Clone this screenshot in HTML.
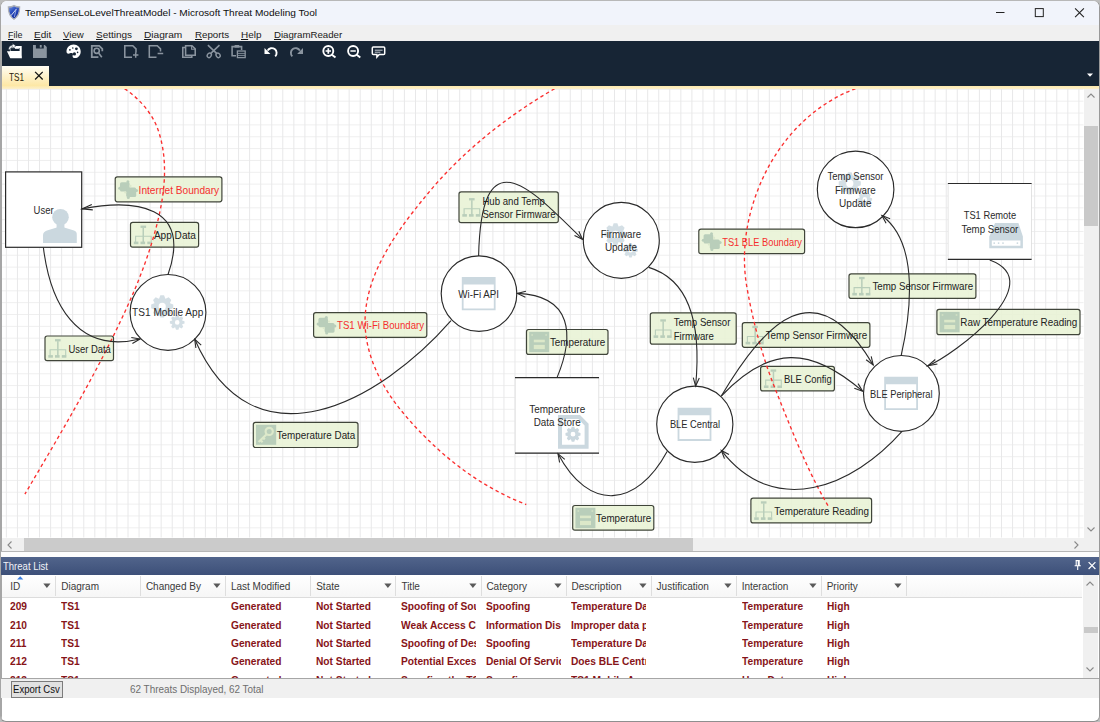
<!DOCTYPE html>
<html><head><meta charset="utf-8"><title>TempSenseLoLevelThreatModel - Microsoft Threat Modeling Tool</title>
<style>
html,body{margin:0;padding:0;}
body{width:1100px;height:722px;overflow:hidden;position:relative;background:#bdbdbd;font-family:"Liberation Sans",sans-serif;}
.t{position:absolute;white-space:nowrap;font-family:"Liberation Sans",sans-serif;}
.abs{position:absolute;}
#win{position:absolute;left:0;top:0;width:1098px;height:720px;border:1px solid #b4b4b4;border-color:#b8b8b8 #999 #8f8f8f #a6a6a6;border-radius:7px 7px 6px 6px;overflow:hidden;background:#fff;box-sizing:content-box;}
u{text-decoration:underline;text-underline-offset:1px;}
svg text{font-family:"Liberation Sans",sans-serif;}
</style></head><body>
<div id="win">
<div id="page" class="abs" style="left:-1px;top:-1px;width:1100px;height:722px;">

<div class="abs" style="left:0;top:0;width:1100px;height:25.5px;background:#f1f4fb;"></div>
<svg class="abs" style="left:7px;top:4px" width="14" height="16" viewBox="0 0 14 16">
<defs><linearGradient id="sh" x1="0" y1="0" x2="0.6" y2="1"><stop offset="0" stop-color="#7d9de6"/><stop offset="0.45" stop-color="#2d50c0"/><stop offset="1" stop-color="#0f2aa0"/></linearGradient></defs>
<path d="M7 1.6 C8.6 2.6 10.6 3 12.6 3 C12.8 8.4 11 12.6 7 15.2 C3 12.6 1.2 8.4 1.4 3 C3.4 3 5.4 2.6 7 1.6 Z" fill="url(#sh)" stroke="#adb0b8" stroke-width="1.3"/>
<path d="M4 11.6 L9.6 4.8" stroke="#e6ebf8" stroke-width="0.9"/><path d="M7.4 13 L9 5.6" stroke="#b9c8ee" stroke-width="0.7"/></svg>
<div class="t" style="left:24.50px;top:7.18px;font-size:9.90px;line-height:11.38px;color:#0e0e0e;transform-origin:0 0;transform:scaleX(1.0226);">TempSenseLoLevelThreatModel - Microsoft Threat Modeling Tool</div>
<svg class="abs" style="left:980px;top:0" width="120" height="25" viewBox="0 0 120 25">
<path d="M16 12.5 H24.5" stroke="#222" stroke-width="1"/>
<rect x="55.3" y="8.6" width="8" height="8" fill="none" stroke="#222" stroke-width="1"/>
<path d="M95.1 8.4 L103.9 17.2 M103.9 8.4 L95.1 17.2" stroke="#222" stroke-width="1.1"/></svg>
<div class="abs" style="left:0;top:25.4px;width:1100px;height:17px;background:#f0f0f0;"></div>
<div class="t" style="left:7.70px;top:28.57px;font-size:9.80px;line-height:11.27px;color:#1a1a1a;transform-origin:0 0;transform:scaleX(0.9119);"><u>F</u>ile</div>
<div class="t" style="left:33.50px;top:28.57px;font-size:9.80px;line-height:11.27px;color:#1a1a1a;transform-origin:0 0;transform:scaleX(1.0185);"><u>E</u>dit</div>
<div class="t" style="left:63.00px;top:28.57px;font-size:9.80px;line-height:11.27px;color:#1a1a1a;transform-origin:0 0;transform:scaleX(0.9874);"><u>V</u>iew</div>
<div class="t" style="left:95.70px;top:28.57px;font-size:9.80px;line-height:11.27px;color:#1a1a1a;transform-origin:0 0;transform:scaleX(1.0167);"><u>S</u>ettings</div>
<div class="t" style="left:144.00px;top:28.57px;font-size:9.80px;line-height:11.27px;color:#1a1a1a;transform-origin:0 0;transform:scaleX(1.0342);"><u>D</u>iagram</div>
<div class="t" style="left:194.50px;top:28.57px;font-size:9.80px;line-height:11.27px;color:#1a1a1a;transform-origin:0 0;transform:scaleX(0.9937);"><u>R</u>eports</div>
<div class="t" style="left:241.20px;top:28.57px;font-size:9.80px;line-height:11.27px;color:#1a1a1a;transform-origin:0 0;transform:scaleX(1.0121);"><u>H</u>elp</div>
<div class="t" style="left:273.90px;top:28.57px;font-size:9.80px;line-height:11.27px;color:#1a1a1a;transform-origin:0 0;transform:scaleX(0.9859);"><u>D</u>iagramReader</div>
<div class="abs" style="left:0;top:41.1px;width:1100px;height:44.5px;background:#172535;"></div>
<svg class="abs" style="left:0;top:41px" width="400" height="24" viewBox="0 41 400 24">
<g fill="#ffffff">
<path d="M9.9,47.6 L11.4,46 H21.7 V57.4 H9.9 Z"/>
<rect x="10.5" y="48.1" width="9.1" height="2.9" fill="#172535"/>
<rect x="15" y="48.1" width="3.9" height="0.8"/>
<path d="M6.9,51.2 H19.6 L22,58.3 H10.3 Z"/>
<path d="M8.4,49.6 C8.6,46.9 10.4,45.3 12.6,45.1 L12.1,43.2 L16,45.9 L12.9,48.2 L12.8,46.7 C11.4,46.9 10.4,47.9 10,49.8 Z" stroke="#172535" stroke-width="0.5"/>
</g>
<path d="M33,45 H44.8 L46.8,47 V58 H33 Z M35.9,45 V48.6 H43.8 V45 Z" fill="#8a949f" fill-rule="evenodd"/>
<rect x="39.8" y="45" width="1.9" height="2.6" fill="#8a949f"/>
<path d="M73.6,44.6 C77.6,44.6 80.7,47.6 80.7,51.4 C80.7,55.3 78,58.1 75,58.1 C73.2,58.1 72.6,57.2 72.6,56.2 C72.6,55.2 73,54.8 73,54.2 C73,53.4 72.3,53 71.3,53 C70.4,53 69.6,53.7 68.6,53.7 C67.3,53.7 66.5,52.7 66.5,51.4 C66.5,47.6 69.6,44.6 73.6,44.6 Z" fill="#ffffff"/>
<circle cx="69.9" cy="49.8" r="0.9" fill="#172535"/>
<circle cx="72.8" cy="48.0" r="0.8" fill="#172535"/>
<circle cx="76.4" cy="48.8" r="1.4" fill="#172535"/>
<circle cx="77.6" cy="52.4" r="0.8" fill="#172535"/>
<circle cx="74.4" cy="53.9" r="1.6" fill="#172535"/>
<path d="M98.4,57.2 H91.8 V45.8 H99.2 L102.3,48.8 V51.2" fill="none" stroke="#8a949f" stroke-width="1.8"/>
<circle cx="96.7" cy="50.8" r="2.6" fill="none" stroke="#8a949f" stroke-width="1.6"/>
<path d="M98.6,52.9 L101.8,57.2" stroke="#8a949f" stroke-width="1.7"/>
<path d="M132,57.3 H124.8 V45.7 H132.8 L136,48.9 V52.4" fill="none" stroke="#8a949f" stroke-width="1.55"/>
<path d="M133,55 H138.4 M135.7,52.3 V57.7" stroke="#8a949f" stroke-width="1.5"/>
<path d="M156.5,57.3 H149.3 V45.7 H157.3 L160.5,48.9 V51.4" fill="none" stroke="#8a949f" stroke-width="1.55"/>
<path d="M157.6,53.6 H163.2" stroke="#8a949f" stroke-width="1.5"/>
<path d="M185.4,47.4 H182.8 V57.2 H191.8 V55.4" fill="none" stroke="#8a949f" stroke-width="1.55"/>
<path d="M185.6,45.7 H192 L195.2,48.9 V55.2 H185.6 Z" fill="none" stroke="#8a949f" stroke-width="1.55"/>
<path d="M191.6,45.9 V49.3 H195" fill="none" stroke="#8a949f" stroke-width="1.1"/>
<path d="M207.9,45.2 L216.6,53.4 M219.5,45.2 L210.8,53.4" stroke="#8a949f" stroke-width="1.6" fill="none"/>
<ellipse cx="209.3" cy="55.3" rx="1.9" ry="2.4" transform="rotate(35 209.3 55.3)" fill="none" stroke="#8a949f" stroke-width="1.4"/>
<ellipse cx="218.1" cy="55.3" rx="1.9" ry="2.4" transform="rotate(-35 218.1 55.3)" fill="none" stroke="#8a949f" stroke-width="1.4"/>
<path d="M236,55.8 H232.1 V46.6 H241.6 V50" fill="none" stroke="#8a949f" stroke-width="1.55"/>
<rect x="234.6" y="45" width="4.6" height="2.6" fill="#8a949f"/>
<rect x="237.4" y="51" width="7.8" height="6.6" fill="none" stroke="#8a949f" stroke-width="1.3"/>
<path d="M238,53.4 H245 M238,55.4 H245" stroke="#8a949f" stroke-width="0.9"/>
<path d="M267.6,50.6 A4.8,4.8 0 1 1 275.2,56.3" fill="none" stroke="#ffffff" stroke-width="1.9"/>
<path d="M264.5,47.9 V54 H270.4 Z" fill="#ffffff"/>
<path d="M299.9,50.6 A4.8,4.8 0 1 0 292.3,56.3" fill="none" stroke="#8a949f" stroke-width="1.9"/>
<path d="M303,47.9 V54 H297.1 Z" fill="#8a949f"/>
<circle cx="328.3" cy="51.0" r="5.0" fill="none" stroke="#ffffff" stroke-width="1.9"/>
<path d="M331.9,54.7 L335.5,57.6" stroke="#ffffff" stroke-width="1.9"/>
<path d="M325.6,51.0 H331 M328.3,48.3 V53.7" stroke="#ffffff" stroke-width="1.7"/>
<circle cx="353.1" cy="51.0" r="5.0" fill="none" stroke="#ffffff" stroke-width="1.9"/>
<path d="M356.7,54.7 L360.3,57.6" stroke="#ffffff" stroke-width="1.9"/>
<path d="M350.4,51.0 H355.8" stroke="#ffffff" stroke-width="1.7"/>
<path d="M373.3,47 H383.7 Q384.7,47 384.7,48 V53.6 Q384.7,54.6 383.7,54.6 H379.2 L376.9,57.1 V54.6 H373.3 Q372.3,54.6 372.3,53.6 V48 Q372.3,47 373.3,47 Z" fill="none" stroke="#ffffff" stroke-width="1.5"/>
<path d="M374.8,50.2 H382.6 M374.8,52.2 H380.4" stroke="#c9ced6" stroke-width="1.0"/>
</svg>
<div class="abs" style="left:1.9px;top:65.9px;width:47.2px;height:20.3px;background:linear-gradient(#fffdf4,#fef3cf 45%,#fde7a4);"></div>
<div class="t" style="left:9.30px;top:71.13px;font-size:10.50px;line-height:12.07px;color:#2a1c08;transform-origin:0 0;transform:scaleX(0.7789);">TS1</div>
<svg class="abs" style="left:34px;top:71px" width="10" height="10" viewBox="0 0 10 10"><path d="M1.1 0.9 L8.7 8.5 M8.7 0.9 L1.1 8.5" stroke="#161616" stroke-width="1.3"/></svg>
<svg class="abs" style="left:1086px;top:72px" width="8" height="6" viewBox="0 0 8 6"><path d="M1 1.5 H7 L4 4.8 Z" fill="#fff"/></svg>
<div class="abs" style="left:0;top:85.8px;width:1100px;height:2.9px;background:linear-gradient(#fde9ac,#fcf0cc);"></div>
<div class="abs" style="left:0;top:41px;width:1.9px;height:681px;background:#a6a6a6;"></div>
<div id="canvas" class="abs" style="left:2.0px;top:88.5px;width:1081.5px;height:449.0px;background:#fff;overflow:hidden;">
<svg class="abs" style="left:-2.0px;top:-88.5px" width="1100" height="722" viewBox="0 0 1100 722">
<path d="M2.0,89.35 H1083.5 M2.0,101.20 H1083.5 M2.0,113.05 H1083.5 M2.0,124.90 H1083.5 M2.0,136.75 H1083.5 M2.0,148.60 H1083.5 M2.0,160.45 H1083.5 M2.0,172.30 H1083.5 M2.0,184.15 H1083.5 M2.0,196.00 H1083.5 M2.0,207.85 H1083.5 M2.0,219.70 H1083.5 M2.0,231.55 H1083.5 M2.0,243.40 H1083.5 M2.0,255.25 H1083.5 M2.0,267.10 H1083.5 M2.0,278.95 H1083.5 M2.0,290.80 H1083.5 M2.0,302.65 H1083.5 M2.0,314.50 H1083.5 M2.0,326.35 H1083.5 M2.0,338.20 H1083.5 M2.0,350.05 H1083.5 M2.0,361.90 H1083.5 M2.0,373.75 H1083.5 M2.0,385.60 H1083.5 M2.0,397.45 H1083.5 M2.0,409.30 H1083.5 M2.0,421.15 H1083.5 M2.0,433.00 H1083.5 M2.0,444.85 H1083.5 M2.0,456.70 H1083.5 M2.0,468.55 H1083.5 M2.0,480.40 H1083.5 M2.0,492.25 H1083.5 M2.0,504.10 H1083.5 M2.0,515.95 H1083.5 M2.0,527.80 H1083.5" stroke="#efefef" stroke-width="1" fill="none"/>
<path d="M6.37,88.5 V537.5 M17.43,88.5 V537.5 M28.48,88.5 V537.5 M39.54,88.5 V537.5 M50.60,88.5 V537.5 M61.66,88.5 V537.5 M72.71,88.5 V537.5 M83.77,88.5 V537.5 M94.83,88.5 V537.5 M105.88,88.5 V537.5 M116.94,88.5 V537.5 M128.00,88.5 V537.5 M139.05,88.5 V537.5 M150.11,88.5 V537.5 M161.17,88.5 V537.5 M172.22,88.5 V537.5 M183.28,88.5 V537.5 M194.34,88.5 V537.5 M205.40,88.5 V537.5 M216.45,88.5 V537.5 M227.51,88.5 V537.5 M238.57,88.5 V537.5 M249.62,88.5 V537.5 M260.68,88.5 V537.5 M271.74,88.5 V537.5 M282.79,88.5 V537.5 M293.85,88.5 V537.5 M304.91,88.5 V537.5 M315.97,88.5 V537.5 M327.02,88.5 V537.5 M338.08,88.5 V537.5 M349.14,88.5 V537.5 M360.19,88.5 V537.5 M371.25,88.5 V537.5 M382.31,88.5 V537.5 M393.37,88.5 V537.5 M404.42,88.5 V537.5 M415.48,88.5 V537.5 M426.54,88.5 V537.5 M437.59,88.5 V537.5 M448.65,88.5 V537.5 M459.71,88.5 V537.5 M470.76,88.5 V537.5 M481.82,88.5 V537.5 M492.88,88.5 V537.5 M503.94,88.5 V537.5 M514.99,88.5 V537.5 M526.05,88.5 V537.5 M537.11,88.5 V537.5 M548.16,88.5 V537.5 M559.22,88.5 V537.5 M570.28,88.5 V537.5 M581.33,88.5 V537.5 M592.39,88.5 V537.5 M603.45,88.5 V537.5 M614.51,88.5 V537.5 M625.56,88.5 V537.5 M636.62,88.5 V537.5 M647.68,88.5 V537.5 M658.73,88.5 V537.5 M669.79,88.5 V537.5 M680.85,88.5 V537.5 M691.90,88.5 V537.5 M702.96,88.5 V537.5 M714.02,88.5 V537.5 M725.08,88.5 V537.5 M736.13,88.5 V537.5 M747.19,88.5 V537.5 M758.25,88.5 V537.5 M769.30,88.5 V537.5 M780.36,88.5 V537.5 M791.42,88.5 V537.5 M802.47,88.5 V537.5 M813.53,88.5 V537.5 M824.59,88.5 V537.5 M835.65,88.5 V537.5 M846.70,88.5 V537.5 M857.76,88.5 V537.5 M868.82,88.5 V537.5 M879.87,88.5 V537.5 M890.93,88.5 V537.5 M901.99,88.5 V537.5 M913.04,88.5 V537.5 M924.10,88.5 V537.5 M935.16,88.5 V537.5 M946.22,88.5 V537.5 M957.27,88.5 V537.5 M968.33,88.5 V537.5 M979.39,88.5 V537.5 M990.44,88.5 V537.5 M1001.50,88.5 V537.5 M1012.56,88.5 V537.5 M1023.61,88.5 V537.5 M1034.67,88.5 V537.5 M1045.73,88.5 V537.5 M1056.79,88.5 V537.5 M1067.84,88.5 V537.5 M1078.90,88.5 V537.5" stroke="#e8e8e9" stroke-width="1" fill="none"/>
<rect x="5.6" y="171.9" width="76.1" height="75.4" fill="#fff" stroke="#2a2a2a" stroke-width="1.2"/>
<g fill="#cbd8df"><circle cx="60.5" cy="217.2" r="8.3"/><rect x="56.6" y="222" width="7.8" height="9" /><path d="M43,243 V235.4 C43,232.6 44.6,231.4 47,230.6 L56.8,227.4 H64.2 L74,230.6 C76.4,231.4 76.8,232.6 76.8,235.4 V243 Z"/></g>
<rect x="515.2" y="377.7" width="83.6" height="75.5" fill="#fff" stroke="#dcdcdc" stroke-width="0.8"/>
<path d="M515,377.7 H599 M515,453.2 H599" stroke="#2a2a2a" stroke-width="1.2"/>
<path d="M558,415.1 H580 L588.6,423.8 V448.8 H558 Z M562,419.1 V444.8 H584.6 V425.4 L578.4,419.1 Z" fill="#cbd8df" fill-rule="evenodd"/>
<path d="M578.21,432.16 L580.50,432.95 L580.50,435.45 L578.21,436.24 L578.13,436.44 L579.18,438.62 L577.42,440.38 L575.24,439.33 L575.04,439.41 L574.25,441.70 L571.75,441.70 L570.96,439.41 L570.76,439.33 L568.58,440.38 L566.82,438.62 L567.87,436.44 L567.79,436.24 L565.50,435.45 L565.50,432.95 L567.79,432.16 L567.87,431.96 L566.82,429.78 L568.58,428.02 L570.76,429.07 L570.96,428.99 L571.75,426.70 L574.25,426.70 L575.04,428.99 L575.24,429.07 L577.42,428.02 L579.18,429.78 L578.13,431.96 Z M570.60,434.20 a2.40,2.40 0 1,0 4.80,0 a2.40,2.40 0 1,0 -4.80,0 Z" fill="#cbd8df" fill-rule="evenodd"/>
<rect x="948.1" y="183.5" width="83.3" height="75.9" fill="#fff" stroke="#dcdcdc" stroke-width="0.8"/>
<path d="M947.9,183.5 H1031.6 M947.9,259.4 H1031.6" stroke="#2a2a2a" stroke-width="1.2"/>
<path d="M995,223 H1018.4 L1022.9,236.6 V248.3 H989.3 V236.6 Z M991.8,240.4 V245.8 H1020.4 V240.4 Z" fill="#cbd8df" fill-rule="evenodd"/>
<circle cx="994.2" cy="243.1" r="0.9" fill="#cbd8df"/>
<circle cx="998.6" cy="243.1" r="0.9" fill="#cbd8df"/>
<circle cx="1003.0" cy="243.1" r="0.9" fill="#cbd8df"/>
<circle cx="1017.4" cy="243.1" r="0.9" fill="#cbd8df"/>
<circle cx="168.0" cy="312.4" r="37.9" fill="#fff" stroke="#2a2a2a" stroke-width="1.15"/>
<path d="M170.02,303.34 L173.25,304.56 L173.25,308.24 L170.02,309.46 L169.90,309.77 L171.31,312.91 L168.71,315.51 L165.57,314.10 L165.26,314.22 L164.04,317.45 L160.36,317.45 L159.14,314.22 L158.83,314.10 L155.69,315.51 L153.09,312.91 L154.50,309.77 L154.38,309.46 L151.15,308.24 L151.15,304.56 L154.38,303.34 L154.50,303.03 L153.09,299.89 L155.69,297.29 L158.83,298.70 L159.14,298.58 L160.36,295.35 L164.04,295.35 L165.26,298.58 L165.57,298.70 L168.71,297.29 L171.31,299.89 L169.90,303.03 Z M158.60,306.40 a3.60,3.60 0 1,0 7.20,0 a3.60,3.60 0 1,0 -7.20,0 Z" fill="#cbd8df" fill-rule="evenodd" opacity="0.82"/><path d="M182.23,320.43 L184.50,321.19 L184.50,323.61 L182.23,324.37 L182.15,324.56 L183.22,326.70 L181.50,328.42 L179.36,327.35 L179.17,327.43 L178.41,329.70 L175.99,329.70 L175.23,327.43 L175.04,327.35 L172.90,328.42 L171.18,326.70 L172.25,324.56 L172.17,324.37 L169.90,323.61 L169.90,321.19 L172.17,320.43 L172.25,320.24 L171.18,318.10 L172.90,316.38 L175.04,317.45 L175.23,317.37 L175.99,315.10 L178.41,315.10 L179.17,317.37 L179.36,317.45 L181.50,316.38 L183.22,318.10 L182.15,320.24 Z M174.90,322.40 a2.30,2.30 0 1,0 4.60,0 a2.30,2.30 0 1,0 -4.60,0 Z" fill="#cbd8df" fill-rule="evenodd" opacity="0.82"/>
<circle cx="479.0" cy="293.6" r="37.8" fill="#fff" stroke="#2a2a2a" stroke-width="1.15"/>
<path d="M461.8,277.0 h33.8 v33.2 h-33.8 Z M463.6,284.5 h30.2 v23.9 h-30.2 Z" fill="#cbd8df" fill-rule="evenodd"/>
<circle cx="621.3" cy="240.3" r="38.0" fill="#fff" stroke="#2a2a2a" stroke-width="1.15"/>
<path d="M623.32,231.24 L626.55,232.46 L626.55,236.14 L623.32,237.36 L623.20,237.67 L624.61,240.81 L622.01,243.41 L618.87,242.00 L618.56,242.12 L617.34,245.35 L613.66,245.35 L612.44,242.12 L612.13,242.00 L608.99,243.41 L606.39,240.81 L607.80,237.67 L607.68,237.36 L604.45,236.14 L604.45,232.46 L607.68,231.24 L607.80,230.93 L606.39,227.79 L608.99,225.19 L612.13,226.60 L612.44,226.48 L613.66,223.25 L617.34,223.25 L618.56,226.48 L618.87,226.60 L622.01,225.19 L624.61,227.79 L623.20,230.93 Z M611.90,234.30 a3.60,3.60 0 1,0 7.20,0 a3.60,3.60 0 1,0 -7.20,0 Z" fill="#cbd8df" fill-rule="evenodd" opacity="0.82"/><path d="M635.53,248.33 L637.80,249.09 L637.80,251.51 L635.53,252.27 L635.45,252.46 L636.52,254.60 L634.80,256.32 L632.66,255.25 L632.47,255.33 L631.71,257.60 L629.29,257.60 L628.53,255.33 L628.34,255.25 L626.20,256.32 L624.48,254.60 L625.55,252.46 L625.47,252.27 L623.20,251.51 L623.20,249.09 L625.47,248.33 L625.55,248.14 L624.48,246.00 L626.20,244.28 L628.34,245.35 L628.53,245.27 L629.29,243.00 L631.71,243.00 L632.47,245.27 L632.66,245.35 L634.80,244.28 L636.52,246.00 L635.45,248.14 Z M628.20,250.30 a2.30,2.30 0 1,0 4.60,0 a2.30,2.30 0 1,0 -4.60,0 Z" fill="#cbd8df" fill-rule="evenodd" opacity="0.82"/>
<circle cx="694.8" cy="424.3" r="38.1" fill="#fff" stroke="#2a2a2a" stroke-width="1.15"/>
<path d="M677.6,407.7 h33.8 v33.2 h-33.8 Z M679.4,415.2 h30.2 v23.9 h-30.2 Z" fill="#cbd8df" fill-rule="evenodd"/>
<circle cx="901.4" cy="393.4" r="37.9" fill="#fff" stroke="#2a2a2a" stroke-width="1.15"/>
<path d="M884.2,376.8 h33.8 v33.2 h-33.8 Z M886.0,384.3 h30.2 v23.9 h-30.2 Z" fill="#cbd8df" fill-rule="evenodd"/>
<circle cx="855.6" cy="189.4" r="38.3" fill="#fff" stroke="#2a2a2a" stroke-width="1.15"/>
<path d="M857.62,180.34 L860.85,181.56 L860.85,185.24 L857.62,186.46 L857.50,186.77 L858.91,189.91 L856.31,192.51 L853.17,191.10 L852.86,191.22 L851.64,194.45 L847.96,194.45 L846.74,191.22 L846.43,191.10 L843.29,192.51 L840.69,189.91 L842.10,186.77 L841.98,186.46 L838.75,185.24 L838.75,181.56 L841.98,180.34 L842.10,180.03 L840.69,176.89 L843.29,174.29 L846.43,175.70 L846.74,175.58 L847.96,172.35 L851.64,172.35 L852.86,175.58 L853.17,175.70 L856.31,174.29 L858.91,176.89 L857.50,180.03 Z M846.20,183.40 a3.60,3.60 0 1,0 7.20,0 a3.60,3.60 0 1,0 -7.20,0 Z" fill="#cbd8df" fill-rule="evenodd" opacity="0.82"/><path d="M869.83,197.43 L872.10,198.19 L872.10,200.61 L869.83,201.37 L869.75,201.56 L870.82,203.70 L869.10,205.42 L866.96,204.35 L866.77,204.43 L866.01,206.70 L863.59,206.70 L862.83,204.43 L862.64,204.35 L860.50,205.42 L858.78,203.70 L859.85,201.56 L859.77,201.37 L857.50,200.61 L857.50,198.19 L859.77,197.43 L859.85,197.24 L858.78,195.10 L860.50,193.38 L862.64,194.45 L862.83,194.37 L863.59,192.10 L866.01,192.10 L866.77,194.37 L866.96,194.45 L869.10,193.38 L870.82,195.10 L869.75,197.24 Z M862.50,199.40 a2.30,2.30 0 1,0 4.60,0 a2.30,2.30 0 1,0 -4.60,0 Z" fill="#cbd8df" fill-rule="evenodd" opacity="0.82"/>
<rect x="115.2" y="176.9" width="106.7" height="24.9" rx="2.2" fill="#e8f3d5" fill-opacity="0.88" stroke="#40453a" stroke-width="1.2"/>
<rect x="120.0" y="182.2" width="9.6" height="9.4" rx="1.6" fill="#b9ceba"/><rect x="126.2" y="187.5" width="10.0" height="9.6" rx="1.6" fill="#b9ceba"/><circle cx="127.9" cy="181.8" r="1.5" fill="#b9ceba"/><circle cx="119.7" cy="188.3" r="1.5" fill="#b9ceba"/><circle cx="128.3" cy="197.5" r="1.5" fill="#b9ceba"/><circle cx="136.5" cy="190.5" r="1.5" fill="#b9ceba"/><circle cx="130.5" cy="185.9" r="1.1" fill="#dbe8cb"/><circle cx="125.3" cy="192.5" r="1.1" fill="#dbe8cb"/>
<rect x="130.5" y="222.4" width="68.1" height="24.8" rx="2.2" fill="#e8f3d5" fill-opacity="0.88" stroke="#40453a" stroke-width="1.2"/>
<rect x="140.5" y="225.6" width="5.6" height="2.3" fill="#b9ceba"/><rect x="142.5" y="227.7" width="1.5" height="14.5" fill="#b9ceba"/><path d="M135.6,241.9 v-5.6 h15.6 v5.6" fill="none" stroke="#b9ceba" stroke-width="1.1"/><rect x="133.8" y="241.6" width="4.6" height="2.6" fill="#b9ceba"/><rect x="140.5" y="241.6" width="4.6" height="2.6" fill="#b9ceba"/><rect x="147.3" y="241.6" width="4.6" height="2.6" fill="#b9ceba"/>
<rect x="45.0" y="336.0" width="68.5" height="24.7" rx="2.2" fill="#e8f3d5" fill-opacity="0.88" stroke="#40453a" stroke-width="1.2"/>
<rect x="55.0" y="339.1" width="5.6" height="2.3" fill="#b9ceba"/><rect x="57.1" y="341.2" width="1.5" height="14.5" fill="#b9ceba"/><path d="M50.1,355.4 v-5.6 h15.6 v5.6" fill="none" stroke="#b9ceba" stroke-width="1.1"/><rect x="48.3" y="355.1" width="4.6" height="2.6" fill="#b9ceba"/><rect x="55.0" y="355.1" width="4.6" height="2.6" fill="#b9ceba"/><rect x="61.8" y="355.1" width="4.6" height="2.6" fill="#b9ceba"/>
<rect x="313.6" y="312.7" width="113.2" height="24.6" rx="2.2" fill="#e8f3d5" fill-opacity="0.88" stroke="#40453a" stroke-width="1.2"/>
<rect x="318.4" y="317.8" width="9.6" height="9.4" rx="1.6" fill="#b9ceba"/><rect x="324.6" y="323.1" width="10.0" height="9.6" rx="1.6" fill="#b9ceba"/><circle cx="326.3" cy="317.4" r="1.5" fill="#b9ceba"/><circle cx="318.1" cy="323.9" r="1.5" fill="#b9ceba"/><circle cx="326.7" cy="333.1" r="1.5" fill="#b9ceba"/><circle cx="334.9" cy="326.1" r="1.5" fill="#b9ceba"/><circle cx="328.9" cy="321.5" r="1.1" fill="#dbe8cb"/><circle cx="323.7" cy="328.1" r="1.1" fill="#dbe8cb"/>
<rect x="253.3" y="422.4" width="104.7" height="25.1" rx="2.2" fill="#e8f3d5" fill-opacity="0.88" stroke="#40453a" stroke-width="1.2"/>
<rect x="256.0" y="424.8" width="20.2" height="20" fill="#b9ceba"/><circle cx="269.2" cy="431.4" r="3.6" fill="none" stroke="#dde9cb" stroke-width="2.2"/><path d="M266.6,434.2 L258.6,442.0 M260.4,440.0 l2.2,2.2 M263.0,437.6 l1.8,1.8" stroke="#dde9cb" stroke-width="2.2" fill="none"/>
<rect x="459.0" y="191.9" width="99.3" height="30.8" rx="2.2" fill="#e8f3d5" fill-opacity="0.88" stroke="#40453a" stroke-width="1.2"/>
<rect x="469.0" y="198.1" width="5.6" height="2.3" fill="#b9ceba"/><rect x="471.1" y="200.2" width="1.5" height="14.5" fill="#b9ceba"/><path d="M464.1,214.4 v-5.6 h15.6 v5.6" fill="none" stroke="#b9ceba" stroke-width="1.1"/><rect x="462.3" y="214.1" width="4.6" height="2.6" fill="#b9ceba"/><rect x="469.0" y="214.1" width="4.6" height="2.6" fill="#b9ceba"/><rect x="475.8" y="214.1" width="4.6" height="2.6" fill="#b9ceba"/>
<rect x="526.5" y="329.5" width="81.5" height="24.9" rx="2.2" fill="#e8f3d5" fill-opacity="0.88" stroke="#40453a" stroke-width="1.2"/>
<rect x="529.2" y="331.8" width="20" height="20.4" fill="#b9ceba"/><rect x="533.8" y="339.7" width="11" height="2.6" fill="#dce8c9"/><rect x="533.8" y="344.9" width="11" height="4.2" fill="#dce8c9"/><circle cx="532.1" cy="334.9" r="1" fill="#cfdfc3"/><circle cx="546.1" cy="334.9" r="1" fill="#cfdfc3"/>
<rect x="650.3" y="312.8" width="85.9" height="31.4" rx="2.2" fill="#e8f3d5" fill-opacity="0.88" stroke="#40453a" stroke-width="1.2"/>
<rect x="660.3" y="319.3" width="5.6" height="2.3" fill="#b9ceba"/><rect x="662.4" y="321.4" width="1.5" height="14.5" fill="#b9ceba"/><path d="M655.4,335.6 v-5.6 h15.6 v5.6" fill="none" stroke="#b9ceba" stroke-width="1.1"/><rect x="653.6" y="335.3" width="4.6" height="2.6" fill="#b9ceba"/><rect x="660.3" y="335.3" width="4.6" height="2.6" fill="#b9ceba"/><rect x="667.1" y="335.3" width="4.6" height="2.6" fill="#b9ceba"/>
<rect x="742.3" y="322.7" width="127.6" height="24.6" rx="2.2" fill="#e8f3d5" fill-opacity="0.88" stroke="#40453a" stroke-width="1.2"/>
<rect x="752.3" y="325.8" width="5.6" height="2.3" fill="#b9ceba"/><rect x="754.4" y="327.9" width="1.5" height="14.5" fill="#b9ceba"/><path d="M747.4,342.1 v-5.6 h15.6 v5.6" fill="none" stroke="#b9ceba" stroke-width="1.1"/><rect x="745.6" y="341.8" width="4.6" height="2.6" fill="#b9ceba"/><rect x="752.3" y="341.8" width="4.6" height="2.6" fill="#b9ceba"/><rect x="759.1" y="341.8" width="4.6" height="2.6" fill="#b9ceba"/>
<rect x="760.6" y="366.4" width="73.8" height="24.5" rx="2.2" fill="#e8f3d5" fill-opacity="0.88" stroke="#40453a" stroke-width="1.2"/>
<rect x="770.6" y="369.4" width="5.6" height="2.3" fill="#b9ceba"/><rect x="772.7" y="371.5" width="1.5" height="14.5" fill="#b9ceba"/><path d="M765.7,385.7 v-5.6 h15.6 v5.6" fill="none" stroke="#b9ceba" stroke-width="1.1"/><rect x="763.9" y="385.4" width="4.6" height="2.6" fill="#b9ceba"/><rect x="770.6" y="385.4" width="4.6" height="2.6" fill="#b9ceba"/><rect x="777.4" y="385.4" width="4.6" height="2.6" fill="#b9ceba"/>
<rect x="698.8" y="229.1" width="105.8" height="24.6" rx="2.2" fill="#e8f3d5" fill-opacity="0.88" stroke="#40453a" stroke-width="1.2"/>
<rect x="703.6" y="234.2" width="9.6" height="9.4" rx="1.6" fill="#b9ceba"/><rect x="709.8" y="239.5" width="10.0" height="9.6" rx="1.6" fill="#b9ceba"/><circle cx="711.5" cy="233.8" r="1.5" fill="#b9ceba"/><circle cx="703.3" cy="240.3" r="1.5" fill="#b9ceba"/><circle cx="711.9" cy="249.5" r="1.5" fill="#b9ceba"/><circle cx="720.1" cy="242.5" r="1.5" fill="#b9ceba"/><circle cx="714.1" cy="237.9" r="1.1" fill="#dbe8cb"/><circle cx="708.9" cy="244.5" r="1.1" fill="#dbe8cb"/>
<rect x="849.0" y="273.8" width="126.9" height="24.6" rx="2.2" fill="#e8f3d5" fill-opacity="0.88" stroke="#40453a" stroke-width="1.2"/>
<rect x="859.0" y="276.9" width="5.6" height="2.3" fill="#b9ceba"/><rect x="861.1" y="279.0" width="1.5" height="14.5" fill="#b9ceba"/><path d="M854.1,293.2 v-5.6 h15.6 v5.6" fill="none" stroke="#b9ceba" stroke-width="1.1"/><rect x="852.3" y="292.9" width="4.6" height="2.6" fill="#b9ceba"/><rect x="859.0" y="292.9" width="4.6" height="2.6" fill="#b9ceba"/><rect x="865.8" y="292.9" width="4.6" height="2.6" fill="#b9ceba"/>
<rect x="936.9" y="309.3" width="143.1" height="25.3" rx="2.2" fill="#e8f3d5" fill-opacity="0.88" stroke="#40453a" stroke-width="1.2"/>
<rect x="939.6" y="311.9" width="20" height="20.4" fill="#b9ceba"/><rect x="944.2" y="319.8" width="11" height="2.6" fill="#dce8c9"/><rect x="944.2" y="325.0" width="11" height="4.2" fill="#dce8c9"/><circle cx="942.5" cy="315.0" r="1" fill="#cfdfc3"/><circle cx="956.5" cy="315.0" r="1" fill="#cfdfc3"/>
<rect x="572.7" y="505.5" width="81.1" height="24.7" rx="2.2" fill="#e8f3d5" fill-opacity="0.88" stroke="#40453a" stroke-width="1.2"/>
<rect x="575.4" y="507.8" width="20" height="20.4" fill="#b9ceba"/><rect x="580.0" y="515.6" width="11" height="2.6" fill="#dce8c9"/><rect x="580.0" y="520.9" width="11" height="4.2" fill="#dce8c9"/><circle cx="578.3" cy="510.9" r="1" fill="#cfdfc3"/><circle cx="592.3" cy="510.9" r="1" fill="#cfdfc3"/>
<rect x="750.9" y="498.2" width="120.7" height="24.7" rx="2.2" fill="#e8f3d5" fill-opacity="0.88" stroke="#40453a" stroke-width="1.2"/>
<rect x="760.9" y="501.3" width="5.6" height="2.3" fill="#b9ceba"/><rect x="763.0" y="503.4" width="1.5" height="14.5" fill="#b9ceba"/><path d="M756.0,517.6 v-5.6 h15.6 v5.6" fill="none" stroke="#b9ceba" stroke-width="1.1"/><rect x="754.2" y="517.3" width="4.6" height="2.6" fill="#b9ceba"/><rect x="760.9" y="517.3" width="4.6" height="2.6" fill="#b9ceba"/><rect x="767.7" y="517.3" width="4.6" height="2.6" fill="#b9ceba"/>
<path d="M124.6,88.6 C140.4,99.6 153.4,114.3 159.1,132.9 C170.0,168.2 162.8,205.8 152.6,240.1 C142.5,274.0 128.3,305.7 112.6,337.5 C86.1,391.0 55.1,442.7 24.9,494.2" fill="none" stroke="#fb2f2f" stroke-width="1.35" stroke-dasharray="3.5 3.0"/>
<path d="M554.6,88.7 C507.1,116.2 463.0,151.1 428.1,193.2 C399.7,227.5 369.3,267.6 365.4,312.9 C362.2,350.3 380.4,386.1 404.2,414.2 C437.2,453.2 478.4,486.3 526.3,504.5" fill="none" stroke="#fb2f2f" stroke-width="1.35" stroke-dasharray="3.5 3.0"/>
<path d="M855.5,88.6 C815.2,103.8 783.5,135.6 764.7,174.2 C747.6,209.3 740.2,249.2 746.9,287.3 C753.0,322.0 762.3,356.7 775.5,389.7 C791.5,429.5 806.8,469.6 828.5,506.6" fill="none" stroke="#fb2f2f" stroke-width="1.35" stroke-dasharray="3.5 3.0"/>
<path d="M43.4,247.6 C50.0,301.5 75.8,354.9 140.0,339.0" fill="none" stroke="#2a2a2a" stroke-width="1.1"/>
<path d="M132.4,343.4 L140.0,339.0 L131.3,337.5" fill="none" stroke="#2a2a2a" stroke-width="1.1"/>
<path d="M168.1,274.3 C192.3,205.0 134.6,198.6 82.0,208.9" fill="none" stroke="#2a2a2a" stroke-width="1.1"/>
<path d="M91.8,204.4 L82.0,208.9 L92.8,209.9" fill="none" stroke="#2a2a2a" stroke-width="1.1"/>
<path d="M451.0,320.7 C381.1,400.7 253.6,473.2 194.7,339.3" fill="none" stroke="#2a2a2a" stroke-width="1.1"/>
<path d="M201.2,345.2 L194.7,339.3 L195.9,348.0" fill="none" stroke="#2a2a2a" stroke-width="1.1"/>
<path d="M478.6,255.9 C481.4,136.3 528.9,186.0 582.5,239.3" fill="none" stroke="#2a2a2a" stroke-width="1.1"/>
<path d="M574.5,235.6 L582.5,239.3 L578.8,231.3" fill="none" stroke="#2a2a2a" stroke-width="1.1"/>
<path d="M648.7,267.4 C698.9,282.5 699.7,343.6 695.6,386.1" fill="none" stroke="#2a2a2a" stroke-width="1.1"/>
<path d="M693.3,377.6 L695.6,386.1 L699.3,378.1" fill="none" stroke="#2a2a2a" stroke-width="1.1"/>
<path d="M557.1,377.4 C574.5,335.5 572.6,295.6 517.4,293.4" fill="none" stroke="#2a2a2a" stroke-width="1.1"/>
<path d="M525.9,291.2 L517.4,293.4 L525.4,297.2" fill="none" stroke="#2a2a2a" stroke-width="1.1"/>
<path d="M721.3,396.0 C764.6,324.1 815.0,266.5 873.2,365.0" fill="none" stroke="#2a2a2a" stroke-width="1.1"/>
<path d="M866.1,359.8 L873.2,365.0 L871.2,356.4" fill="none" stroke="#2a2a2a" stroke-width="1.1"/>
<path d="M721.3,396.0 C769.6,345.0 810.6,346.2 862.6,391.2" fill="none" stroke="#2a2a2a" stroke-width="1.1"/>
<path d="M854.3,388.3 L862.6,391.2 L858.1,383.6" fill="none" stroke="#2a2a2a" stroke-width="1.1"/>
<path d="M901.1,355.9 C910.2,315.4 920.3,244.0 881.9,215.5" fill="none" stroke="#2a2a2a" stroke-width="1.1"/>
<path d="M890.1,218.8 L881.9,215.5 L886.1,223.3" fill="none" stroke="#2a2a2a" stroke-width="1.1"/>
<path d="M989.7,259.9 C1051.7,282.4 952.8,355.9 927.8,365.8" fill="none" stroke="#2a2a2a" stroke-width="1.1"/>
<path d="M935.3,359.5 L927.8,365.8 L937.4,364.0" fill="none" stroke="#2a2a2a" stroke-width="1.1"/>
<path d="M902.0,431.4 C853.0,486.8 774.5,519.3 721.3,450.4" fill="none" stroke="#2a2a2a" stroke-width="1.1"/>
<path d="M729.0,454.6 L721.3,450.4 L724.5,458.6" fill="none" stroke="#2a2a2a" stroke-width="1.1"/>
<path d="M667.1,451.5 C636.5,508.1 588.7,511.9 558.0,453.8" fill="none" stroke="#2a2a2a" stroke-width="1.1"/>
<path d="M564.8,459.4 L558.0,453.8 L559.6,462.5" fill="none" stroke="#2a2a2a" stroke-width="1.1"/>
<text x="138.6" y="194.0" font-size="10.30" fill="#f52e2e" textLength="80.60" lengthAdjust="spacingAndGlyphs">Internet Boundary</text>
<text x="153.9" y="239.0" font-size="10.30" fill="#222222" textLength="42.00" lengthAdjust="spacingAndGlyphs">App Data</text>
<text x="68.4" y="353.0" font-size="10.30" fill="#222222" textLength="42.40" lengthAdjust="spacingAndGlyphs">User Data</text>
<text x="337.0" y="329.0" font-size="10.30" fill="#f52e2e" textLength="87.10" lengthAdjust="spacingAndGlyphs">TS1 Wi-Fi Boundary</text>
<text x="276.7" y="439.0" font-size="10.30" fill="#222222" textLength="78.60" lengthAdjust="spacingAndGlyphs">Temperature Data</text>
<text x="482.4" y="205.0" font-size="10.30" fill="#222222" textLength="62.36" lengthAdjust="spacingAndGlyphs">Hub and Temp</text>
<text x="482.4" y="218.0" font-size="10.30" fill="#222222" textLength="73.20" lengthAdjust="spacingAndGlyphs">Sensor Firmware</text>
<text x="549.9" y="346.0" font-size="10.30" fill="#222222" textLength="55.40" lengthAdjust="spacingAndGlyphs">Temperature</text>
<text x="673.7" y="326.0" font-size="10.30" fill="#222222" textLength="56.70" lengthAdjust="spacingAndGlyphs">Temp Sensor</text>
<text x="673.7" y="340.0" font-size="10.30" fill="#222222" textLength="40.10" lengthAdjust="spacingAndGlyphs">Firmware</text>
<text x="765.7" y="339.0" font-size="10.30" fill="#222222" textLength="101.50" lengthAdjust="spacingAndGlyphs">Temp Sensor Firmware</text>
<text x="784.0" y="383.0" font-size="10.30" fill="#222222" textLength="47.70" lengthAdjust="spacingAndGlyphs">BLE Config</text>
<text x="722.2" y="246.0" font-size="10.30" fill="#f52e2e" textLength="79.70" lengthAdjust="spacingAndGlyphs">TS1 BLE Boundary</text>
<text x="872.4" y="290.0" font-size="10.30" fill="#222222" textLength="100.80" lengthAdjust="spacingAndGlyphs">Temp Sensor Firmware</text>
<text x="960.3" y="326.0" font-size="10.30" fill="#222222" textLength="117.00" lengthAdjust="spacingAndGlyphs">Raw Temperature Reading</text>
<text x="596.1" y="522.0" font-size="10.30" fill="#222222" textLength="55.00" lengthAdjust="spacingAndGlyphs">Temperature</text>
<text x="774.3" y="515.0" font-size="10.30" fill="#222222" textLength="94.60" lengthAdjust="spacingAndGlyphs">Temperature Reading</text>
<text x="132.1" y="316" font-size="10.30" fill="#2a2a2a" textLength="71.20" lengthAdjust="spacingAndGlyphs">TS1 Mobile App</text>
<text x="458.3" y="298" font-size="10.30" fill="#2a2a2a" textLength="40.70" lengthAdjust="spacingAndGlyphs">Wi-Fi API</text>
<text x="600.8" y="238" font-size="10.30" fill="#2a2a2a" textLength="40.30" lengthAdjust="spacingAndGlyphs">Firmware</text>
<text x="604.9" y="251" font-size="10.30" fill="#2a2a2a" textLength="32.10" lengthAdjust="spacingAndGlyphs">Update</text>
<text x="669.9" y="428" font-size="10.30" fill="#2a2a2a" textLength="50.20" lengthAdjust="spacingAndGlyphs">BLE Central</text>
<text x="870.1" y="398" font-size="10.30" fill="#2a2a2a" textLength="62.50" lengthAdjust="spacingAndGlyphs">BLE Peripheral</text>
<text x="827.5" y="180" font-size="10.30" fill="#2a2a2a" textLength="55.90" lengthAdjust="spacingAndGlyphs">Temp Sensor</text>
<text x="834.9" y="194" font-size="10.30" fill="#2a2a2a" textLength="40.80" lengthAdjust="spacingAndGlyphs">Firmware</text>
<text x="839.1" y="207" font-size="10.30" fill="#2a2a2a" textLength="32.40" lengthAdjust="spacingAndGlyphs">Update</text>
<text x="33.6" y="214" font-size="10.30" fill="#2a2a2a" textLength="20.00" lengthAdjust="spacingAndGlyphs">User</text>
<text x="529.3" y="413" font-size="10.30" fill="#2a2a2a" textLength="55.90" lengthAdjust="spacingAndGlyphs">Temperature</text>
<text x="533.7" y="426" font-size="10.30" fill="#2a2a2a" textLength="47.00" lengthAdjust="spacingAndGlyphs">Data Store</text>
<text x="963.7" y="219" font-size="10.30" fill="#2a2a2a" textLength="52.40" lengthAdjust="spacingAndGlyphs">TS1 Remote</text>
<text x="961.4" y="233" font-size="10.30" fill="#2a2a2a" textLength="56.90" lengthAdjust="spacingAndGlyphs">Temp Sensor</text>
</svg></div>
<div class="abs" style="left:1083.5px;top:88.7px;width:15px;height:449px;background:#f0f0f0;"></div>
<div class="abs" style="left:1083.8px;top:126px;width:14.2px;height:99.8px;background:#c9c9c9;"></div>
<svg class="abs" style="left:1085px;top:90px" width="12" height="12" viewBox="0 0 12 12"><path d="M2.5 7.5 L6 4 L9.5 7.5" fill="none" stroke="#8a8a8a" stroke-width="1.1"/></svg>
<svg class="abs" style="left:1085px;top:523px" width="12" height="12" viewBox="0 0 12 12"><path d="M2.5 4.5 L6 8 L9.5 4.5" fill="none" stroke="#8a8a8a" stroke-width="1.1"/></svg>
<div class="abs" style="left:2px;top:537.5px;width:1097px;height:13.5px;background:#f0f0f0;"></div>
<div class="abs" style="left:24.3px;top:537.8px;width:668.7px;height:13.3px;background:#cbcbcb;"></div>
<svg class="abs" style="left:4px;top:538.5px" width="12" height="12" viewBox="0 0 12 12"><path d="M7.5 2.5 L4 6 L7.5 9.5" fill="none" stroke="#8a8a8a" stroke-width="1.1"/></svg>
<svg class="abs" style="left:1070px;top:538.5px" width="12" height="12" viewBox="0 0 12 12"><path d="M4.5 2.5 L8 6 L4.5 9.5" fill="none" stroke="#8a8a8a" stroke-width="1.1"/></svg>
<div class="abs" style="left:0;top:551.1px;width:1100px;height:1.4px;background:#b6b6b6;"></div>
<div class="abs" style="left:0;top:552.4px;width:1100px;height:4.8px;background:#fdfdfd;"></div>
<div class="abs" style="left:1.2px;top:557px;width:1098px;height:17.8px;background:linear-gradient(#51648b,#3d5079);"></div>
<div class="t" style="left:3.20px;top:560.13px;font-size:10.50px;line-height:12.07px;color:#f1f3f8;transform-origin:0 0;transform:scaleX(0.9072);">Threat List</div>
<svg class="abs" style="left:1070px;top:558px" width="28" height="16" viewBox="1070 558 28 16"><path d="M1075.6,560.6 H1079.8 M1076.2,560.6 V565.6 M1079.2,560.6 V565.6 M1078.3,560.6 V565.6 M1074.6,565.8 H1080.8 M1077.7,566 V570" stroke="#fff" stroke-width="1.1" fill="none"/><path d="M1088.6,562.2 L1095.4,569 M1095.4,562.2 L1088.6,569" stroke="#fff" stroke-width="1.2"/></svg>
<div class="abs" style="left:2px;top:575.2px;width:1097px;height:103px;background:#fff;"></div>
<div class="abs" style="left:2px;top:575.2px;width:1080px;height:21.5px;background:linear-gradient(#ffffff,#f6f6f6);border-bottom:1px solid #dcdcdc;"></div>
<div class="abs" style="left:55.1px;top:576px;width:1px;height:20px;background:#dedede;"></div>
<div class="abs" style="left:140.2px;top:576px;width:1px;height:20px;background:#dedede;"></div>
<div class="abs" style="left:225.3px;top:576px;width:1px;height:20px;background:#dedede;"></div>
<div class="abs" style="left:310.3px;top:576px;width:1px;height:20px;background:#dedede;"></div>
<div class="abs" style="left:395.4px;top:576px;width:1px;height:20px;background:#dedede;"></div>
<div class="abs" style="left:480.5px;top:576px;width:1px;height:20px;background:#dedede;"></div>
<div class="abs" style="left:565.6px;top:576px;width:1px;height:20px;background:#dedede;"></div>
<div class="abs" style="left:650.7px;top:576px;width:1px;height:20px;background:#dedede;"></div>
<div class="abs" style="left:735.7px;top:576px;width:1px;height:20px;background:#dedede;"></div>
<div class="abs" style="left:820.8px;top:576px;width:1px;height:20px;background:#dedede;"></div>
<div class="abs" style="left:905.9px;top:576px;width:1px;height:20px;background:#dedede;"></div>
<div class="t" style="left:10.20px;top:581.08px;font-size:10.00px;line-height:11.50px;color:#3a3a3a;">ID</div>
<svg class="abs" style="left:43.2px;top:583.2px" width="8" height="6" viewBox="0 0 8 6"><path d="M0.3,0.6 H7.5 L3.9,5.0 Z" fill="#5a5a5a"/></svg>
<div class="t" style="left:61.20px;top:581.08px;font-size:10.00px;line-height:11.50px;color:#3a3a3a;">Diagram</div>
<div class="t" style="left:145.90px;top:581.08px;font-size:10.00px;line-height:11.50px;color:#3a3a3a;">Changed By</div>
<svg class="abs" style="left:213.4px;top:583.2px" width="8" height="6" viewBox="0 0 8 6"><path d="M0.3,0.6 H7.5 L3.9,5.0 Z" fill="#5a5a5a"/></svg>
<div class="t" style="left:230.90px;top:581.08px;font-size:10.00px;line-height:11.50px;color:#3a3a3a;">Last Modified</div>
<div class="t" style="left:316.20px;top:581.08px;font-size:10.00px;line-height:11.50px;color:#3a3a3a;">State</div>
<svg class="abs" style="left:383.5px;top:583.2px" width="8" height="6" viewBox="0 0 8 6"><path d="M0.3,0.6 H7.5 L3.9,5.0 Z" fill="#5a5a5a"/></svg>
<div class="t" style="left:401.40px;top:581.08px;font-size:10.00px;line-height:11.50px;color:#3a3a3a;">Title</div>
<svg class="abs" style="left:468.6px;top:583.2px" width="8" height="6" viewBox="0 0 8 6"><path d="M0.3,0.6 H7.5 L3.9,5.0 Z" fill="#5a5a5a"/></svg>
<div class="t" style="left:486.40px;top:581.08px;font-size:10.00px;line-height:11.50px;color:#3a3a3a;">Category</div>
<svg class="abs" style="left:553.7px;top:583.2px" width="8" height="6" viewBox="0 0 8 6"><path d="M0.3,0.6 H7.5 L3.9,5.0 Z" fill="#5a5a5a"/></svg>
<div class="t" style="left:571.50px;top:581.08px;font-size:10.00px;line-height:11.50px;color:#3a3a3a;">Description</div>
<svg class="abs" style="left:638.8px;top:583.2px" width="8" height="6" viewBox="0 0 8 6"><path d="M0.3,0.6 H7.5 L3.9,5.0 Z" fill="#5a5a5a"/></svg>
<div class="t" style="left:656.60px;top:581.08px;font-size:10.00px;line-height:11.50px;color:#3a3a3a;">Justification</div>
<svg class="abs" style="left:723.8px;top:583.2px" width="8" height="6" viewBox="0 0 8 6"><path d="M0.3,0.6 H7.5 L3.9,5.0 Z" fill="#5a5a5a"/></svg>
<div class="t" style="left:741.70px;top:581.08px;font-size:10.00px;line-height:11.50px;color:#3a3a3a;">Interaction</div>
<svg class="abs" style="left:808.9px;top:583.2px" width="8" height="6" viewBox="0 0 8 6"><path d="M0.3,0.6 H7.5 L3.9,5.0 Z" fill="#5a5a5a"/></svg>
<div class="t" style="left:826.70px;top:581.08px;font-size:10.00px;line-height:11.50px;color:#3a3a3a;">Priority</div>
<svg class="abs" style="left:894.0px;top:583.2px" width="8" height="6" viewBox="0 0 8 6"><path d="M0.3,0.6 H7.5 L3.9,5.0 Z" fill="#5a5a5a"/></svg>
<svg class="abs" style="left:17.4px;top:576.2px" width="7" height="4" viewBox="0 0 7 4"><path d="M0.1,3.6 L3.2,0.2 L6.3,3.6 Z" fill="#3c7fe0"/></svg>
<div class="abs" style="left:2px;top:597.5px;width:1080px;height:80.5px;overflow:hidden;">
<div class="t" style="left:8.0px;top:2.74px;width:48.0px;overflow:hidden;"><div style="font-size:10.7px;line-height:12.30px;font-weight:bold;color:#871418;transform-origin:0 0;transform:scaleX(0.955);">209</div></div>
<div class="t" style="left:59.0px;top:2.74px;width:48.0px;overflow:hidden;"><div style="font-size:10.7px;line-height:12.30px;font-weight:bold;color:#871418;transform-origin:0 0;transform:scaleX(0.955);">TS1</div></div>
<div class="t" style="left:228.7px;top:2.74px;width:74.6px;overflow:hidden;"><div style="font-size:10.7px;line-height:12.30px;font-weight:bold;color:#871418;transform-origin:0 0;transform:scaleX(0.955);">Generated</div></div>
<div class="t" style="left:314.0px;top:2.74px;width:74.6px;overflow:hidden;"><div style="font-size:10.7px;line-height:12.30px;font-weight:bold;color:#871418;transform-origin:0 0;transform:scaleX(0.955);">Not Started</div></div>
<div class="t" style="left:399.2px;top:2.74px;width:74.6px;overflow:hidden;"><div style="font-size:10.7px;line-height:12.30px;font-weight:bold;color:#871418;transform-origin:0 0;transform:scaleX(0.955);">Spoofing of Source Data</div></div>
<div class="t" style="left:484.2px;top:2.74px;width:74.6px;overflow:hidden;"><div style="font-size:10.7px;line-height:12.30px;font-weight:bold;color:#871418;transform-origin:0 0;transform:scaleX(0.955);">Spoofing</div></div>
<div class="t" style="left:569.3px;top:2.74px;width:74.6px;overflow:hidden;"><div style="font-size:10.7px;line-height:12.30px;font-weight:bold;color:#871418;transform-origin:0 0;transform:scaleX(0.955);">Temperature Data</div></div>
<div class="t" style="left:739.5px;top:2.74px;width:74.6px;overflow:hidden;"><div style="font-size:10.7px;line-height:12.30px;font-weight:bold;color:#871418;transform-origin:0 0;transform:scaleX(0.955);">Temperature</div></div>
<div class="t" style="left:824.5px;top:2.74px;width:74.6px;overflow:hidden;"><div style="font-size:10.7px;line-height:12.30px;font-weight:bold;color:#871418;transform-origin:0 0;transform:scaleX(0.955);">High</div></div>
<div class="t" style="left:8.0px;top:21.14px;width:48.0px;overflow:hidden;"><div style="font-size:10.7px;line-height:12.30px;font-weight:bold;color:#871418;transform-origin:0 0;transform:scaleX(0.955);">210</div></div>
<div class="t" style="left:59.0px;top:21.14px;width:48.0px;overflow:hidden;"><div style="font-size:10.7px;line-height:12.30px;font-weight:bold;color:#871418;transform-origin:0 0;transform:scaleX(0.955);">TS1</div></div>
<div class="t" style="left:228.7px;top:21.14px;width:74.6px;overflow:hidden;"><div style="font-size:10.7px;line-height:12.30px;font-weight:bold;color:#871418;transform-origin:0 0;transform:scaleX(0.955);">Generated</div></div>
<div class="t" style="left:314.0px;top:21.14px;width:74.6px;overflow:hidden;"><div style="font-size:10.7px;line-height:12.30px;font-weight:bold;color:#871418;transform-origin:0 0;transform:scaleX(0.955);">Not Started</div></div>
<div class="t" style="left:399.2px;top:21.14px;width:74.6px;overflow:hidden;"><div style="font-size:10.7px;line-height:12.30px;font-weight:bold;color:#871418;transform-origin:0 0;transform:scaleX(0.955);">Weak Access Control</div></div>
<div class="t" style="left:484.2px;top:21.14px;width:74.6px;overflow:hidden;"><div style="font-size:10.7px;line-height:12.30px;font-weight:bold;color:#871418;transform-origin:0 0;transform:scaleX(0.955);">Information Disclosure</div></div>
<div class="t" style="left:569.3px;top:21.14px;width:74.6px;overflow:hidden;"><div style="font-size:10.7px;line-height:12.30px;font-weight:bold;color:#871418;transform-origin:0 0;transform:scaleX(0.955);">Improper data protection</div></div>
<div class="t" style="left:739.5px;top:21.14px;width:74.6px;overflow:hidden;"><div style="font-size:10.7px;line-height:12.30px;font-weight:bold;color:#871418;transform-origin:0 0;transform:scaleX(0.955);">Temperature</div></div>
<div class="t" style="left:824.5px;top:21.14px;width:74.6px;overflow:hidden;"><div style="font-size:10.7px;line-height:12.30px;font-weight:bold;color:#871418;transform-origin:0 0;transform:scaleX(0.955);">High</div></div>
<div class="t" style="left:8.0px;top:39.54px;width:48.0px;overflow:hidden;"><div style="font-size:10.7px;line-height:12.30px;font-weight:bold;color:#871418;transform-origin:0 0;transform:scaleX(0.955);">211</div></div>
<div class="t" style="left:59.0px;top:39.54px;width:48.0px;overflow:hidden;"><div style="font-size:10.7px;line-height:12.30px;font-weight:bold;color:#871418;transform-origin:0 0;transform:scaleX(0.955);">TS1</div></div>
<div class="t" style="left:228.7px;top:39.54px;width:74.6px;overflow:hidden;"><div style="font-size:10.7px;line-height:12.30px;font-weight:bold;color:#871418;transform-origin:0 0;transform:scaleX(0.955);">Generated</div></div>
<div class="t" style="left:314.0px;top:39.54px;width:74.6px;overflow:hidden;"><div style="font-size:10.7px;line-height:12.30px;font-weight:bold;color:#871418;transform-origin:0 0;transform:scaleX(0.955);">Not Started</div></div>
<div class="t" style="left:399.2px;top:39.54px;width:74.6px;overflow:hidden;"><div style="font-size:10.7px;line-height:12.30px;font-weight:bold;color:#871418;transform-origin:0 0;transform:scaleX(0.955);">Spoofing of Destination</div></div>
<div class="t" style="left:484.2px;top:39.54px;width:74.6px;overflow:hidden;"><div style="font-size:10.7px;line-height:12.30px;font-weight:bold;color:#871418;transform-origin:0 0;transform:scaleX(0.955);">Spoofing</div></div>
<div class="t" style="left:569.3px;top:39.54px;width:74.6px;overflow:hidden;"><div style="font-size:10.7px;line-height:12.30px;font-weight:bold;color:#871418;transform-origin:0 0;transform:scaleX(0.955);">Temperature Data</div></div>
<div class="t" style="left:739.5px;top:39.54px;width:74.6px;overflow:hidden;"><div style="font-size:10.7px;line-height:12.30px;font-weight:bold;color:#871418;transform-origin:0 0;transform:scaleX(0.955);">Temperature</div></div>
<div class="t" style="left:824.5px;top:39.54px;width:74.6px;overflow:hidden;"><div style="font-size:10.7px;line-height:12.30px;font-weight:bold;color:#871418;transform-origin:0 0;transform:scaleX(0.955);">High</div></div>
<div class="t" style="left:8.0px;top:57.94px;width:48.0px;overflow:hidden;"><div style="font-size:10.7px;line-height:12.30px;font-weight:bold;color:#871418;transform-origin:0 0;transform:scaleX(0.955);">212</div></div>
<div class="t" style="left:59.0px;top:57.94px;width:48.0px;overflow:hidden;"><div style="font-size:10.7px;line-height:12.30px;font-weight:bold;color:#871418;transform-origin:0 0;transform:scaleX(0.955);">TS1</div></div>
<div class="t" style="left:228.7px;top:57.94px;width:74.6px;overflow:hidden;"><div style="font-size:10.7px;line-height:12.30px;font-weight:bold;color:#871418;transform-origin:0 0;transform:scaleX(0.955);">Generated</div></div>
<div class="t" style="left:314.0px;top:57.94px;width:74.6px;overflow:hidden;"><div style="font-size:10.7px;line-height:12.30px;font-weight:bold;color:#871418;transform-origin:0 0;transform:scaleX(0.955);">Not Started</div></div>
<div class="t" style="left:399.2px;top:57.94px;width:74.6px;overflow:hidden;"><div style="font-size:10.7px;line-height:12.30px;font-weight:bold;color:#871418;transform-origin:0 0;transform:scaleX(0.955);">Potential Excessive</div></div>
<div class="t" style="left:484.2px;top:57.94px;width:74.6px;overflow:hidden;"><div style="font-size:10.7px;line-height:12.30px;font-weight:bold;color:#871418;transform-origin:0 0;transform:scaleX(0.955);">Denial Of Service</div></div>
<div class="t" style="left:569.3px;top:57.94px;width:74.6px;overflow:hidden;"><div style="font-size:10.7px;line-height:12.30px;font-weight:bold;color:#871418;transform-origin:0 0;transform:scaleX(0.955);">Does BLE Central</div></div>
<div class="t" style="left:739.5px;top:57.94px;width:74.6px;overflow:hidden;"><div style="font-size:10.7px;line-height:12.30px;font-weight:bold;color:#871418;transform-origin:0 0;transform:scaleX(0.955);">Temperature</div></div>
<div class="t" style="left:824.5px;top:57.94px;width:74.6px;overflow:hidden;"><div style="font-size:10.7px;line-height:12.30px;font-weight:bold;color:#871418;transform-origin:0 0;transform:scaleX(0.955);">High</div></div>
<div class="t" style="left:8.0px;top:76.34px;width:48.0px;overflow:hidden;"><div style="font-size:10.7px;line-height:12.30px;font-weight:bold;color:#871418;transform-origin:0 0;transform:scaleX(0.955);">213</div></div>
<div class="t" style="left:59.0px;top:76.34px;width:48.0px;overflow:hidden;"><div style="font-size:10.7px;line-height:12.30px;font-weight:bold;color:#871418;transform-origin:0 0;transform:scaleX(0.955);">TS1</div></div>
<div class="t" style="left:228.7px;top:76.34px;width:74.6px;overflow:hidden;"><div style="font-size:10.7px;line-height:12.30px;font-weight:bold;color:#871418;transform-origin:0 0;transform:scaleX(0.955);">Generated</div></div>
<div class="t" style="left:314.0px;top:76.34px;width:74.6px;overflow:hidden;"><div style="font-size:10.7px;line-height:12.30px;font-weight:bold;color:#871418;transform-origin:0 0;transform:scaleX(0.955);">Not Started</div></div>
<div class="t" style="left:399.2px;top:76.34px;width:74.6px;overflow:hidden;"><div style="font-size:10.7px;line-height:12.30px;font-weight:bold;color:#871418;transform-origin:0 0;transform:scaleX(0.955);">Spoofing the TS1</div></div>
<div class="t" style="left:484.2px;top:76.34px;width:74.6px;overflow:hidden;"><div style="font-size:10.7px;line-height:12.30px;font-weight:bold;color:#871418;transform-origin:0 0;transform:scaleX(0.955);">Spoofing</div></div>
<div class="t" style="left:569.3px;top:76.34px;width:74.6px;overflow:hidden;"><div style="font-size:10.7px;line-height:12.30px;font-weight:bold;color:#871418;transform-origin:0 0;transform:scaleX(0.955);">TS1 Mobile App</div></div>
<div class="t" style="left:739.5px;top:76.34px;width:74.6px;overflow:hidden;"><div style="font-size:10.7px;line-height:12.30px;font-weight:bold;color:#871418;transform-origin:0 0;transform:scaleX(0.955);">User Data</div></div>
<div class="t" style="left:824.5px;top:76.34px;width:74.6px;overflow:hidden;"><div style="font-size:10.7px;line-height:12.30px;font-weight:bold;color:#871418;transform-origin:0 0;transform:scaleX(0.955);">High</div></div>
</div>
<div class="abs" style="left:1082.5px;top:575.2px;width:15.5px;height:103px;background:#f0f0f0;"></div>
<div class="abs" style="left:1083.5px;top:626.5px;width:14px;height:6.5px;background:#c9c9c9;"></div>
<svg class="abs" style="left:1084px;top:578px" width="12" height="12" viewBox="0 0 12 12"><path d="M2.5 7.5 L6 4 L9.5 7.5" fill="none" stroke="#8a8a8a" stroke-width="1.1"/></svg>
<svg class="abs" style="left:1084px;top:663px" width="12" height="12" viewBox="0 0 12 12"><path d="M2.5 4.5 L6 8 L9.5 4.5" fill="none" stroke="#8a8a8a" stroke-width="1.1"/></svg>
<div class="abs" style="left:0;top:678px;width:1100px;height:1px;background:#a6a6a6;"></div>
<div class="abs" style="left:0;top:679px;width:1100px;height:19.3px;background:#f0f0f0;"></div>
<div class="abs" style="left:10.9px;top:681px;width:51.8px;height:16.6px;box-sizing:border-box;border:1px solid #7c7c7c;background:#e1e1e1;"></div>
<div class="t" style="left:13.30px;top:683.80px;font-size:10.20px;line-height:11.73px;color:#111;transform-origin:0 0;transform:scaleX(0.9403);">Export Csv</div><div class="t" style="left:130.00px;top:683.99px;font-size:10.00px;line-height:11.50px;color:#6e6e6e;transform-origin:0 0;transform:scaleX(0.9910);">62 Threats Displayed, 62 Total</div>
</div></div></body></html>
